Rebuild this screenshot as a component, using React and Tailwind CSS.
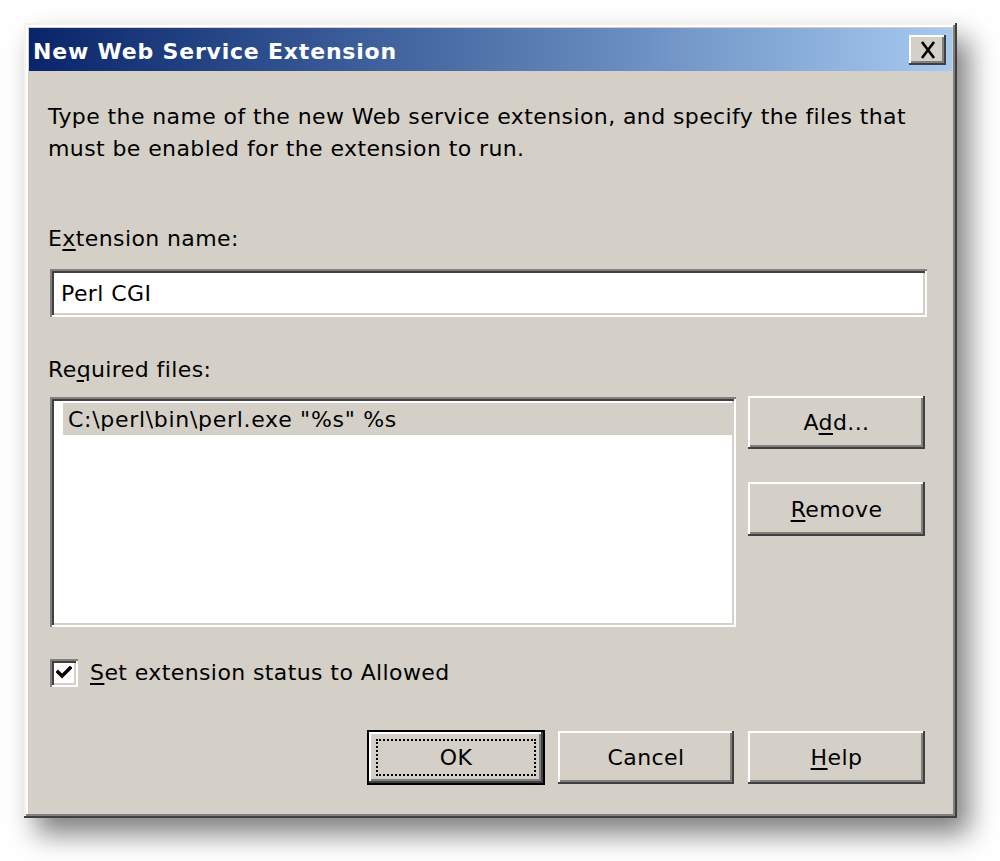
import React from 'react';

const raised =
  'shadow-[inset_-2px_-2px_#404040,inset_2px_2px_#ffffff,inset_-4px_-4px_#808080,inset_4px_4px_#d4d0c8]';
const sunken =
  'shadow-[inset_2px_2px_#808080,inset_-2px_-2px_#ffffff,inset_4px_4px_#404040,inset_-4px_-4px_#d4d0c8]';

const Button = ({ children, className = '' }) => (
  <div className={`flex items-center justify-center bg-[#d4d0c8] text-black ${raised} ${className}`}>
    <span>{children}</span>
  </div>
);

const App = () => {
  return (
    <div
      className="min-h-screen w-full bg-white pt-[23px] pl-[24px] text-[22px] text-black"
      style={{ fontFamily: '"DejaVu Sans", Verdana, sans-serif' }}
    >
      <div
        className="w-[933px] h-[795px] bg-[#d4d0c8] p-[5px] shadow-[inset_-2px_-2px_#404040,inset_2px_2px_#f4f2ee,inset_-4px_-4px_#808080,inset_4px_4px_#ffffff,12px_16px_26px_rgba(0,0,0,0.5)]"
      >
        {/* title bar */}
        <div className="h-[43px] flex items-center justify-between pl-[4px] pr-[6px] bg-gradient-to-r from-[#0a246a] to-[#a6caf0]">
          <span className="text-white font-bold text-[22px] tracking-[0.8px] mt-[3px]">New Web Service Extension</span>
          <div className={`w-[37px] h-[30px] flex items-center justify-center bg-[#d4d0c8] ${raised}`}>
            <svg width="16" height="18" viewBox="0 0 16 18">
              <path d="M2 1 L14 17 M14 1 L2 17" stroke="#000" strokeWidth="2.6" />
            </svg>
          </div>
        </div>

        <div className="pl-[19px] pr-[20px] tracking-[0.4px]">
          <p className="mt-[30px] leading-[32px] whitespace-nowrap">
            Type the name of the new Web service extension, and specify the files that
            <br />
            must be enabled for the extension to run.
          </p>

          <div className="mt-[58px] leading-[32px]">
            E<u className="underline-offset-[3px]">x</u>tension name:
          </div>
          <div className={`mt-[14px] ml-[2px] h-[48px] w-[877px] bg-white flex items-center pl-[11px] ${sunken}`}>
            Perl CGI
          </div>

          <div className="mt-[37px] leading-[32px]">
            Re<u className="underline-offset-[3px]">q</u>uired files:
          </div>

          <div className="mt-[10px] flex">
            <div className={`mt-[1px] ml-[2px] h-[230px] w-[686px] bg-white pt-[6px] pl-[13px] pr-[3px] ${sunken}`}>
              <div className="h-[32px] bg-[#d4d0c8] flex items-center pl-[5px] tracking-[0.7px]">
                C:\perl\bin\perl.exe "%s" %s
              </div>
            </div>
            <div className="ml-[12px] flex flex-col">
              <Button className="w-[177px] h-[53px]">
                A<u className="underline-offset-[3px]">d</u>d...
              </Button>
              <Button className="w-[177px] h-[54px] mt-[33px]">
                <u className="underline-offset-[3px]">R</u>emove
              </Button>
            </div>
          </div>

          <div className="mt-[31px] ml-[2px] flex items-center h-[29px]">
            <div className={`w-[28px] h-[28px] bg-white flex items-center justify-center ${sunken}`}>
              <svg width="16" height="14" viewBox="0 0 16 14">
                <path d="M2 6 L6 10 L14 2" fill="none" stroke="#000" strokeWidth="3.4" strokeLinecap="square" />
              </svg>
            </div>
            <span className="ml-[12px]">
              <u className="underline-offset-[3px]">S</u>et extension status to Allowed
            </span>
          </div>

          <div className="mt-[43px] flex justify-end pr-[7px]">
            <div className="w-[178px] h-[55px] border-2 border-black">
              <div className={`w-full h-full p-[7px] bg-[#d4d0c8] ${raised}`}>
                <div className="w-full h-full border-2 border-dotted border-black flex items-center justify-center">
                  OK
                </div>
              </div>
            </div>
            <Button className="w-[176px] h-[53px] mt-[1px] ml-[13px]">Cancel</Button>
            <Button className="w-[177px] h-[53px] mt-[1px] ml-[14px]">
              <u className="underline-offset-[3px]">H</u>elp
            </Button>
          </div>
        </div>
      </div>
    </div>
  );
};

export default App;
